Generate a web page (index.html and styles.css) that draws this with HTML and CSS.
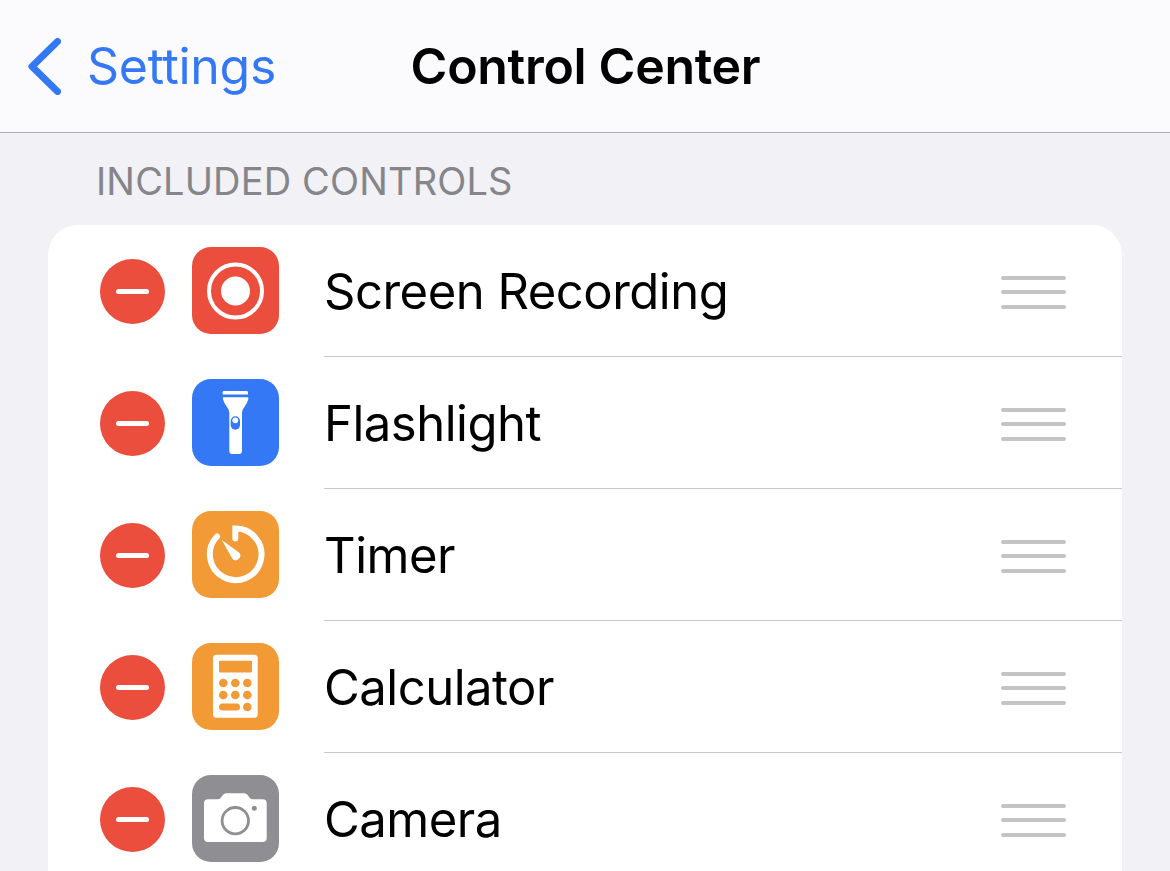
FILE: index.html
```html
<!DOCTYPE html>
<html lang="en">
<head>
	<meta charset="UTF-8">
	<meta name="viewport" content="width=device-width, initial-scale=1.0">
	<title>Control Center</title>
	<link rel="stylesheet" href="styles.css">
</head>
<body>
	<header class="navbar">
		<a class="back">
			<svg class="chevron" viewBox="0 0 33 57"><path d="M29.500 3.500 L4 28.500 L29.500 53.500" /></svg>
			<span>Settings</span>
		</a>
		<h1 class="title">Control Center</h1>
	</header>

	<h2 class="section-label">INCLUDED CONTROLS</h2>

	<ul class="list">
		<li class="row">
			<span class="remove"></span>
			<svg class="icon" viewBox="0 0 87 87">
				<rect width="87" height="87" rx="19" fill="#ec4e3e" />
				<circle cx="43.500" cy="44" r="26.500" fill="none" stroke="#fff" stroke-width="4" />
				<circle cx="43.500" cy="44" r="14.500" fill="#fff" />
			</svg>
			<div class="row-body">
				<span class="label">Screen Recording</span>
				<span class="handle"><i></i><i></i><i></i></span>
			</div>
		</li>
		<li class="row">
			<span class="remove"></span>
			<svg class="icon" viewBox="0 0 87 87">
				<rect width="87" height="87" rx="19" fill="#3478f6" />
				<rect x="30.700" y="12" width="25.300" height="3.600" rx="1.200" fill="#fff" />
				<path d="M31.500 18.300 H55.500 Q56.800 18.300 56.400 20 Q55.500 24 52 28.500 Q50 31 50 34 V72 Q50 75 47 75 H40.300 Q37.300 75 37.300 72 V34 Q37.300 31 35.300 28.500 Q31.800 24 30.900 20 Q30.500 18.300 31.500 18.300 Z" fill="#fff" />
				<rect x="38.700" y="37.300" width="9.300" height="13.400" rx="4.650" fill="#3478f6" />
				<circle cx="43.300" cy="41.300" r="2.900" fill="#fff" />
			</svg>
			<div class="row-body">
				<span class="label">Flashlight</span>
				<span class="handle"><i></i><i></i><i></i></span>
			</div>
		</li>
		<li class="row">
			<span class="remove"></span>
			<svg class="icon" viewBox="0 0 87 87">
				<rect width="87" height="87" rx="19" fill="#f19a36" />
				<path d="M25 25.500 A25.800 25.800 0 1 0 43.300 17.500 V27.500" fill="none" stroke="#fff" stroke-width="6" stroke-linecap="round" />
				<path d="M29.800 29 L47 41.500 A4.600 4.600 0 0 1 40.500 48 Z" fill="#fff" />
			</svg>
			<div class="row-body">
				<span class="label">Timer</span>
				<span class="handle"><i></i><i></i><i></i></span>
			</div>
		</li>
		<li class="row">
			<span class="remove"></span>
			<svg class="icon" viewBox="0 0 87 87">
				<rect width="87" height="87" rx="19" fill="#f19a36" />
				<rect x="21" y="11.700" width="44.700" height="63" rx="3.500" fill="#fff" />
				<g fill="#f19a36">
					<rect x="27" y="17.700" width="33" height="11.700" rx="1" />
					<circle cx="31.300" cy="40" r="4.300" />
					<circle cx="43.300" cy="40" r="4.300" />
					<circle cx="55.300" cy="40" r="4.300" />
					<circle cx="31.300" cy="52" r="4.300" />
					<circle cx="43.300" cy="52" r="4.300" />
					<circle cx="55.300" cy="52" r="4.300" />
					<rect x="27" y="60.400" width="21" height="7.200" rx="3.600" />
					<circle cx="55.300" cy="64" r="4.300" />
				</g>
			</svg>
			<div class="row-body">
				<span class="label">Calculator</span>
				<span class="handle"><i></i><i></i><i></i></span>
			</div>
		</li>
		<li class="row">
			<span class="remove"></span>
			<svg class="icon" viewBox="0 0 87 87">
				<rect width="87" height="87" rx="19" fill="#8e8e93" />
				<path d="M16 24.300 H26 Q28 24.300 29.500 22 Q31.500 18.300 34.500 18.300 H52 Q55 18.300 57 22 Q58.500 24.300 60.500 24.300 H70.700 Q74.700 24.300 74.700 28.300 V63 Q74.700 67 70.700 67 H16 Q12 67 12 63 V28.300 Q12 24.300 16 24.300 Z" fill="#fff" />
				<circle cx="43.300" cy="45.700" r="13.200" fill="none" stroke="#8e8e93" stroke-width="2.800" />
				<circle cx="62.300" cy="33.300" r="2.500" fill="#8e8e93" />
			</svg>
			<div class="row-body">
				<span class="label">Camera</span>
				<span class="handle"><i></i><i></i><i></i></span>
			</div>
		</li>
	</ul>
</body>
</html>
```

FILE: styles.css
```css
html, body
{
	margin: 0;
	padding: 0;
	height: 100%;
	overflow: hidden;
}

body
{
	background-color: #f1f1f6;
	color: #000000;
	font-family: Inter, "Liberation Sans", sans-serif;
}

.navbar
{
	display: grid;
	grid-template-columns: 1fr auto 1fr;
	align-items: center;
	height: 132px;
	background-color: #fbfbfd;
	border-bottom: 1px solid #aeaeb0;
}

.back
{
	grid-column: 1;
	display: flex;
	align-items: center;
	gap: 26px;
	padding-left: 28px;
	color: #3478f6;
	font-size: 50px;
	letter-spacing: -0.3px;
}

.chevron
{
	width: 33px;
	height: 57px;
}

.chevron path
{
	fill: none;
	stroke: #3478f6;
	stroke-width: 7px;
	stroke-linecap: round;
	stroke-linejoin: round;
}

.title
{
	grid-column: 2;
	margin: 0 0 0 1px;
	font-size: 50px;
	font-weight: 600;
	letter-spacing: -0.3px;
}

.section-label
{
	margin: 0;
	padding: 26px 0 21px 96px;
	color: #85858a;
	font-size: 38px;
	line-height: 45px;
	font-weight: 400;
	letter-spacing: 0.15px;
}

.list
{
	margin: 0 48px;
	padding: 0;
	list-style: none;
	background-color: #ffffff;
	border-radius: 30px 30px 0 0;
}

.row
{
	display: flex;
	align-items: center;
	padding-left: 52px;
}

.remove
{
	display: flex;
	align-items: center;
	justify-content: center;
	width: 65px;
	height: 65px;
	border-radius: 50%;
	background-color: #ec4e3e;
}

.remove::after
{
	content: "";
	width: 33px;
	height: 5px;
	border-radius: 3px;
	background-color: #ffffff;
}

.icon
{
	width: 87px;
	height: 87px;
	margin-left: 27px;
	margin-bottom: 2px;
}

.row-body
{
	flex: 1;
	display: flex;
	align-items: center;
	justify-content: space-between;
	height: 131px;
	margin-left: 45px;
	padding-right: 56px;
	border-bottom: 1px solid #c8c8ca;
}

.label
{
	padding-top: 2px;
	font-size: 49px;
	letter-spacing: -0.5px;
}

.handle
{
	display: flex;
	flex-direction: column;
	gap: 10.500px;
	margin-top: 3px;
}

.handle i
{
	display: block;
	width: 65px;
	height: 4px;
	border-radius: 2px;
	background-color: #c4c4c6;
}
```
